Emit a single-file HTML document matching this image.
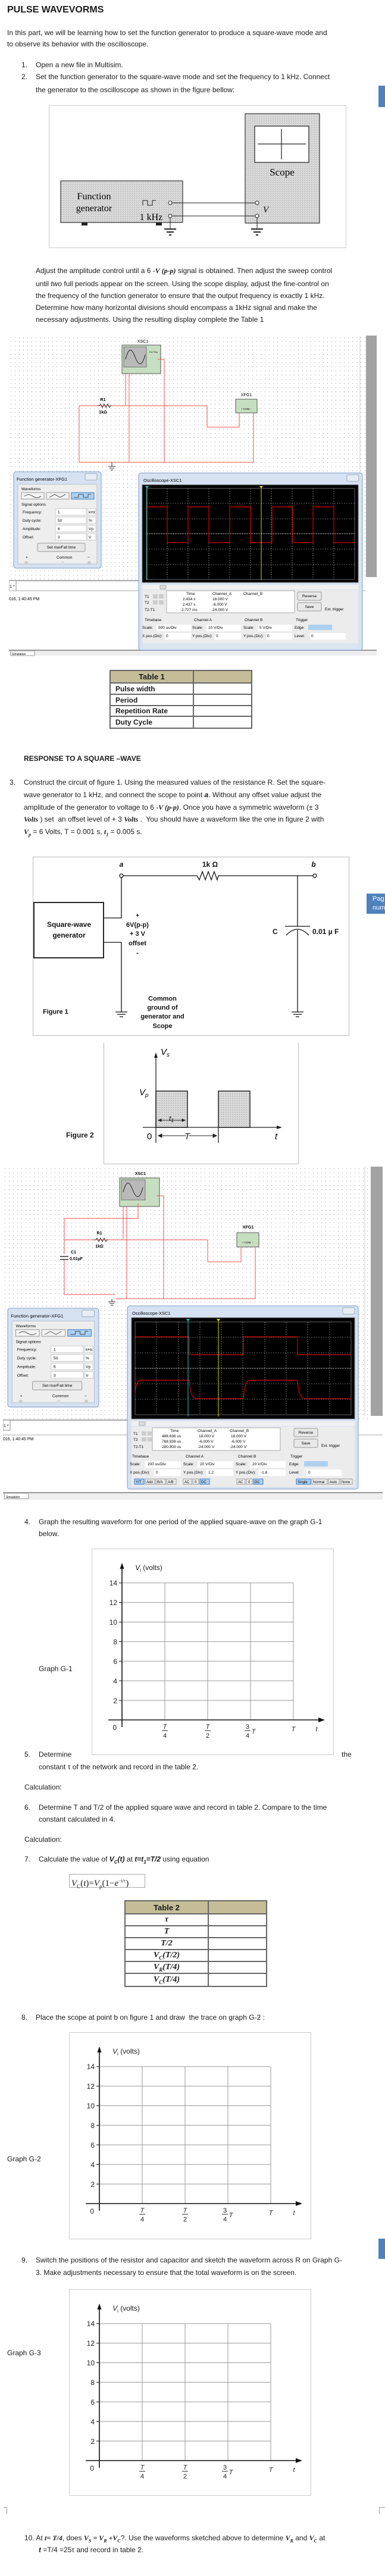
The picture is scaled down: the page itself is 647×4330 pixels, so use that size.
<!DOCTYPE html>
<html><head><meta charset="utf-8">
<style>
*{margin:0;padding:0;box-sizing:border-box}
body{width:647px;height:4330px;position:relative;overflow:hidden;background:#fff;font-family:"Liberation Sans",sans-serif;color:#1a1a1a}
.t{position:absolute;white-space:nowrap;font-size:12px;line-height:16px}
.b{font-weight:bold}
.s{font-family:"Liberation Serif",serif;font-style:italic;font-weight:bold}
.abs{position:absolute}
svg text{font-family:"Liberation Sans",sans-serif}
.tb{position:absolute;border-collapse:collapse;font-size:12px}
.tb td{border:2px solid #666;padding:0 8px}
.tab{position:absolute;background:#4f81bd}
</style></head><body>

<div class="t b" style="left:12px;top:7px;font-size:16px;line-height:20px">PULSE WAVEVORMS</div>
<div class="t" style="left:12px;top:47px">In this part, we will be learning how to set the function generator to produce a square-wave mode and</div>
<div class="t" style="left:12px;top:66px">to observe its behavior with the oscilloscope.</div>
<div class="t" style="left:36px;top:101px">1.</div><div class="t" style="left:60px;top:101px">Open a new file in Multisim.</div>
<div class="t" style="left:36px;top:121px">2.</div><div class="t" style="left:60px;top:121px">Set the function generator to the square-wave mode and set the frequency to 1 kHz. Connect</div>
<div class="t" style="left:60px;top:143px">the generator to the oscilloscope as shown in the figure bellow:</div>
<div class="tab" style="left:636px;top:144px;width:11px;height:36px"></div>

<!-- figure scope -->
<svg class="abs" style="left:82px;top:177px" width="500" height="241" viewBox="0 0 500 241">
<defs><pattern id="st" width="3" height="3" patternUnits="userSpaceOnUse"><rect width="3" height="3" fill="#e2e2e2"/><rect width="1" height="1" fill="#999"/><rect x="2" y="1" width="1" height="1" fill="#aaa"/></pattern></defs>
<rect x="0.5" y="0.5" width="499" height="239" fill="#fff" stroke="#ccc"/>
<rect x="330" y="14" width="125" height="184" fill="url(#st)" stroke="#333" stroke-width="1.2"/>
<rect x="346" y="35" width="91" height="61" fill="#fff" stroke="#222" stroke-width="1.2"/>
<line x1="351" y1="65" x2="432" y2="65" stroke="#222" stroke-width="1.2"/><line x1="391" y1="40" x2="391" y2="91" stroke="#222" stroke-width="1.2"/>
<text x="392" y="118" font-family="Liberation Serif" font-size="17" text-anchor="middle" style="font-family:'Liberation Serif'">Scope</text>
<rect x="20" y="127" width="205" height="70" fill="url(#st)" stroke="#333" stroke-width="1.2"/>
<rect x="55" y="197" width="10" height="5" fill="#222"/><rect x="180" y="197" width="10" height="5" fill="#222"/>
<text x="76" y="158" font-size="16" text-anchor="middle" style="font-family:'Liberation Serif'">Function</text>
<text x="76" y="178" font-size="16" text-anchor="middle" style="font-family:'Liberation Serif'">generator</text>
<path d="M158 168V160H166V168H174V160H180" fill="none" stroke="#222"/>
<text x="172" y="193" font-size="16" text-anchor="middle" style="font-family:'Liberation Serif'">1 kHz</text>
<circle cx="204" cy="164" r="3" fill="#fff" stroke="#222"/><circle cx="204" cy="186" r="3" fill="#fff" stroke="#222"/>
<circle cx="350" cy="164" r="3" fill="#fff" stroke="#222"/><circle cx="350" cy="186" r="3" fill="#fff" stroke="#222"/>
<line x1="207" y1="164" x2="347" y2="164" stroke="#222"/><line x1="207" y1="186" x2="347" y2="186" stroke="#222"/>
<line x1="204" y1="189" x2="204" y2="208" stroke="#222"/><line x1="350" y1="189" x2="350" y2="208" stroke="#222"/>
<path d="M194 208h20M198 213h12M202 218h4" stroke="#222" stroke-width="2"/>
<path d="M340 208h20M344 213h12M348 218h4" stroke="#222" stroke-width="2"/>
<text x="360" y="180" font-size="15" font-style="italic" style="font-family:'Liberation Serif'">V</text>
</svg>

<div class="t" style="left:60px;top:447px">Adjust the amplitude control until a 6 -<span class="s">V (p-p)</span> signal is obtained. Then adjust the sweep control</div>
<div class="t" style="left:60px;top:469px">until <i>two</i> full periods appear on the screen. Using the scope display, adjust the fine-control on</div>
<div class="t" style="left:60px;top:489px">the frequency of the function generator to ensure that the output frequency is exactly 1 kHz.</div>
<div class="t" style="left:60px;top:509px">Determine how many horizontal divisions should encompass a 1kHz signal and make the</div>
<div class="t" style="left:60px;top:529px">necessary adjustments. Using the resulting display complete the Table 1</div>

<!-- MULTISIM 1 -->
<svg class="abs" style="left:15px;top:564px" width="618" height="540" viewBox="0 0 618 540">
<defs><pattern id="dg" width="7" height="7" patternUnits="userSpaceOnUse"><rect width="7" height="7" fill="#fff"/><rect x="3" y="3" width="1" height="1" fill="#9a9a9a"/></pattern></defs>
<rect width="600" height="412" fill="url(#dg)"/>
<rect x="600" width="18" height="406" fill="#a3a3a3"/>
<line x1="590" y1="0" x2="590" y2="406" stroke="#ccc"/>
<text x="225" y="12" font-size="7" text-anchor="middle">XSC1</text>
<rect x="190" y="16" width="65" height="48" fill="#c7dfc1" stroke="#555"/>
<rect x="193" y="19" width="38" height="34" fill="#b9b9b9" stroke="#777"/>
<path d="M196 40C201 20 206 20 212 36S224 52 229 32" fill="none" stroke="#222"/>
<text x="236" y="29" font-size="4">Ext Trig</text>
<g fill="none" stroke="#f05050" stroke-width="1">
<path d="M118 118H333V154H387V130"/><path d="M118 118V213H411V130"/>
<path d="M196 64V118"/><path d="M202 64V213"/><path d="M250 40H261V213"/>
</g>
<path d="M148 118h4l2-3 3 6 3-6 3 6 3-6 3 6 2-3h2" fill="none" stroke="#333"/>
<text x="158" y="110" font-size="7" font-weight="bold" text-anchor="middle">R1</text>
<text x="158" y="131" font-size="7" font-weight="bold" text-anchor="middle">1kΩ</text>
<text x="399" y="102" font-size="7" text-anchor="middle">XFG1</text>
<rect x="381" y="107" width="36" height="23" fill="#c7dfc1" stroke="#555"/>
<text x="399" y="125" font-size="4.5" text-anchor="middle">+ COM −</text>
<path d="M173 213v7M167 220h12M169 223h8M171 226h4" stroke="#333"/>
<!-- func gen -->
<g transform="translate(8,229)">
<rect x="0" y="0" width="147" height="162" rx="4" fill="#d6e2f2" stroke="#7f9cc6"/>
<text x="5" y="15" font-size="7.5">Function generator-XFG1</text>
<rect x="120" y="3" width="20" height="11" rx="2" fill="#e6edf7" stroke="#9ab"/>
<rect x="7" y="21" width="133" height="134" fill="#eeeeee" stroke="#b5c1d0"/>
<text x="13" y="31" font-size="6.5">Waveforms</text>
<rect x="13" y="35" width="38" height="11" fill="#f3f3f3" stroke="#999"/><rect x="55" y="35" width="38" height="11" fill="#f3f3f3" stroke="#999"/><rect x="97" y="35" width="38" height="11" fill="#acd0f2" stroke="#3a7ac4"/>
<path d="M18 41q7-5 14 0t14 0M60 43l9-5 9 5 9-5M101 43h8v-5h8v5h8v-5h5" fill="none" stroke="#333" stroke-width=".8"/>
<text x="13" y="57" font-size="6.5">Signal options</text>
<g font-size="6.5"><text x="15" y="70">Frequency:</text><text x="15" y="84">Duty cycle:</text><text x="15" y="98">Amplitude:</text><text x="15" y="112">Offset:</text></g>
<g fill="#fff" stroke="#ccc"><rect x="70" y="62" width="52" height="11"/><rect x="70" y="76" width="52" height="11"/><rect x="70" y="90" width="52" height="11"/><rect x="70" y="104" width="52" height="11"/><rect x="124" y="62" width="14" height="11"/><rect x="124" y="76" width="14" height="11"/><rect x="124" y="90" width="14" height="11"/><rect x="124" y="104" width="14" height="11"/></g>
<g font-size="6.5"><text x="74" y="70">1</text><text x="74" y="84">50</text><text x="74" y="98">6</text><text x="74" y="112">3</text><text x="126" y="70">kHz</text><text x="126" y="84">%</text><text x="126" y="98">Vp</text><text x="126" y="112">V</text></g>
<rect x="40" y="120" width="80" height="14" rx="2" fill="#e8e8e8" stroke="#999"/>
<text x="80" y="129" font-size="6.5" text-anchor="middle">Set rise/Fall time</text>
<text x="20" y="146" font-size="6.5">+</text><text x="72" y="146" font-size="6.5">Common</text><text x="124" y="146" font-size="6.5">−</text>
<circle cx="21" cy="153" r="3" fill="#ccc"/><circle cx="82" cy="153" r="3" fill="#ddd"/><circle cx="127" cy="153" r="3" fill="#ccc"/>
</g>
<!-- status -->
<line x1="0" y1="412" x2="218" y2="412" stroke="#888" stroke-width="1.5"/>
<rect x="0" y="412" width="12" height="17" fill="#fff" stroke="#888"/><text x="1" y="424" font-size="7">1 *</text>
<line x1="0" y1="429" x2="618" y2="429" stroke="#aaa"/>
<text x="0" y="445" font-size="7">016, 1:40:45 PM</text>
<rect x="600" y="412" width="18" height="117" fill="#fff"/>
<line x1="0" y1="529" x2="618" y2="529" stroke="#999" stroke-width="2"/><rect x="0" y="530" width="618" height="8" fill="#eee"/>
<rect x="3" y="530" width="40" height="8" fill="#fff" stroke="#999"/><text x="5" y="537" font-size="5">Simulation</text>
<!-- scope window -->
<g transform="translate(218,231)">
<rect x="0" y="0" width="376" height="298" rx="4" fill="#d6e2f2" stroke="#7f9cc6"/>
<text x="8" y="15" font-size="7.5">Oscilloscope-XSC1</text>
<rect x="350" y="3" width="20" height="11" rx="2" fill="#e6edf7" stroke="#9ab"/>
<rect x="6" y="20" width="363" height="164" fill="#000" stroke="#666"/>
<rect x="13" y="26" width="350" height="153" fill="none" stroke="#aaa" stroke-width=".6"/>
<g stroke="#bbb" stroke-width=".6" stroke-dasharray="2 2">
<path d="M48 26V179M83 26V179M118 26V179M153 26V179M188 26V179M223 26V179M258 26V179M293 26V179M328 26V179"/>
<path d="M13 51H363M13 77H363M13 128H363M13 154H363"/></g>
<path d="M13 102H363" stroke="#ddd" stroke-width=".8" stroke-dasharray="3 1"/>
<path d="M13 57H48V117H83V57H118V117H153V57H188V117H224V57H259V117H293V57H328V117H363" fill="none" stroke="#d00" stroke-width="1.2"/>
<line x1="14" y1="24" x2="14" y2="180" stroke="#2cc"/><line x1="206" y1="24" x2="206" y2="180" stroke="#dd0"/>
<path d="M203 22h6l-3 4z" fill="#dd0"/><path d="M11 22h6l-3 4z" fill="#2cc"/>
<rect x="6" y="188" width="363" height="8" fill="#f0f0f0"/><rect x="36" y="189" width="10" height="6" fill="#ddd" stroke="#aaa"/>
<rect x="6" y="197" width="363" height="97" fill="#ececec"/>
<rect x="47" y="198" width="215" height="37" fill="#fff" stroke="#aaa"/>
<g font-size="6.5"><text x="10" y="210">T1</text><text x="10" y="220">T2</text><text x="10" y="232">T2-T1</text>
<rect x="24" y="204" width="8" height="7" fill="#ccc"/><rect x="34" y="204" width="8" height="7" fill="#ccc"/><rect x="24" y="214" width="8" height="7" fill="#ccc"/><rect x="34" y="214" width="8" height="7" fill="#ccc"/>
<text x="80" y="205">Time</text><text x="124" y="205">Channel_A</text><text x="176" y="205">Channel_B</text>
<text x="74" y="214">2.434 s</text><text x="124" y="214">18.000 V</text>
<text x="74" y="223">2.437 s</text><text x="124" y="223">-6.000 V</text>
<text x="72" y="232">2.727 ms</text><text x="122" y="232">-24.000 V</text>
<rect x="267" y="200" width="40" height="14" rx="2" fill="#e8e8e8" stroke="#999"/><text x="287" y="209" text-anchor="middle">Reverse</text>
<rect x="267" y="218" width="40" height="14" rx="2" fill="#e8e8e8" stroke="#999"/><text x="287" y="227" text-anchor="middle">Save</text>
<text x="313" y="231">Ext. trigger</text>
<text x="10" y="249">Timebase</text><text x="93" y="249">Channel A</text><text x="178" y="249">Channel B</text><text x="264" y="249">Trigger</text>
<text x="6" y="262">Scale:</text><rect x="30" y="255" width="58" height="11" fill="#fff"/><text x="33" y="262">500 us/Div</text>
<text x="90" y="262">Scale:</text><rect x="114" y="255" width="58" height="11" fill="#fff"/><text x="117" y="262">10 V/Div</text>
<text x="176" y="262">Scale:</text><rect x="200" y="255" width="58" height="11" fill="#fff"/><text x="203" y="262">5 V/Div</text>
<text x="262" y="262">Edge:</text><rect x="285" y="255" width="40" height="9" fill="#acd0f2"/>
<text x="6" y="276">X pos.(Div):</text><rect x="44" y="269" width="44" height="11" fill="#fff"/><text x="46" y="276">0</text>
<text x="90" y="276">Y pos.(Div):</text><rect x="128" y="269" width="44" height="11" fill="#fff"/><text x="130" y="276">0</text>
<text x="176" y="276">Y pos.(Div):</text><rect x="214" y="269" width="44" height="11" fill="#fff"/><text x="216" y="276">0</text>
<text x="262" y="276">Level:</text><rect x="288" y="269" width="60" height="11" fill="#fff"/><text x="290" y="276">0</text></g>
<rect x="6" y="286" width="363" height="8" fill="#dde6f0"/>
</g>
</svg>

<!-- Table 1 -->
<table class="tb" style="left:184px;top:1126px;width:240px">
<tr style="height:21px;background:#c4bd97"><td class="b" style="width:140px;text-align:center;font-size:13px">Table 1</td><td></td></tr>
<tr style="height:19px"><td class="b">Pulse width</td><td></td></tr>
<tr style="height:19px"><td class="b">Period</td><td></td></tr>
<tr style="height:18px"><td class="b">Repetition Rate</td><td></td></tr>
<tr style="height:20px"><td class="b">Duty Cycle</td><td></td></tr>
</table>

<div class="t b" style="left:40px;top:1267px">RESPONSE TO A SQUARE –WAVE</div>
<div class="t" style="left:16px;top:1307px">3.</div>
<div class="t" style="left:40px;top:1307px">Construct the circuit of figure 1. Using the measured values of the resistance R. Set the square-</div>
<div class="t" style="left:40px;top:1328px">wave generator to 1 kHz, and connect the scope to point <b><i>a</i></b>. Without any offset value adjust the</div>
<div class="t" style="left:40px;top:1349px">amplitude of the generator to voltage to 6 -<span class="s">V (p-p)</span>. Once you have a symmetric waveform (± 3</div>
<div class="t" style="left:40px;top:1369px"><span class="s">Volts</span> ) set&nbsp; an offset level of + 3 <span class="s">Volts</span> .&nbsp; You should have a waveform like the one in figure 2 with</div>
<div class="t" style="left:40px;top:1390px"><span class="s">V<sub style="font-size:8px">p</sub></span> = 6 Volts, T = 0.001 s, <span class="s">t<sub style="font-size:8px">1</sub></span> = 0.005 s.</div>

<!-- Figure 1 -->
<svg class="abs" style="left:55px;top:1440px" width="533" height="302" viewBox="0 0 533 302">
<rect x="0.5" y="0.5" width="531" height="300" fill="#fff" stroke="#bbb"/>
<g font-weight="bold" font-size="12" fill="#111">
<text x="149" y="17" text-anchor="middle" font-style="italic">a</text>
<text x="298" y="17" text-anchor="middle">1k Ω</text>
<text x="472" y="17" text-anchor="middle" font-style="italic">b</text>
<text x="61" y="118" text-anchor="middle">Square-wave</text><text x="61" y="136" text-anchor="middle">generator</text>
<text x="176" y="102" text-anchor="middle" font-size="10">+</text>
<text x="176" y="118" text-anchor="middle" font-size="11">6V(p-p)</text>
<text x="176" y="133" text-anchor="middle" font-size="11">+ 3 V</text>
<text x="176" y="149" text-anchor="middle" font-size="11">offset</text>
<text x="176" y="165" text-anchor="middle" font-size="11">-</text>
<text x="218" y="242" text-anchor="middle" font-size="11">Common</text><text x="218" y="257" text-anchor="middle" font-size="11">ground of</text><text x="218" y="272" text-anchor="middle" font-size="11">generator and</text><text x="218" y="288" text-anchor="middle" font-size="11">Scope</text>
<text x="17" y="264" font-size="11">Figure 1</text>
<text x="403" y="130" font-size="12">C</text>
<text x="470" y="130" font-size="12">0.01 µ F</text>
</g>
<g fill="none" stroke="#111" stroke-width="1.3">
<circle cx="149" cy="32" r="3" fill="#fff"/><circle cx="474" cy="32" r="3" fill="#fff"/>
<path d="M152 32H276l4 7 5-14 5 14 5-14 5 14 5-14 5 14 2-7H471"/>
<path d="M445 32V117M424 117H466M426 132Q445 112 464 132M445 123V261"/>
<rect x="2" y="77" width="117" height="93" stroke-width="1.8"/>
<path d="M119 103H149V35M119 144H149V261"/>
<path d="M139 261h20M142 265h14M146 269h6M435 261h20M438 265h14M442 269h6"/>
</g>
</svg>
<div class="tab" style="left:616px;top:1502px;width:31px;height:34px;color:#fff;font-size:11px;line-height:15px;padding:2px 0 0 10px">Pag<br>num</div>

<!-- Figure 2 -->
<div class="t b" style="left:111px;top:1900px">Figure 2</div>
<svg class="abs" style="left:174px;top:1753px" width="328" height="204" viewBox="0 0 328 204">
<defs><pattern id="st2" width="3" height="3" patternUnits="userSpaceOnUse"><rect width="3" height="3" fill="#ddd"/><rect width="1" height="1" fill="#888"/></pattern></defs>
<path d="M0.5 0V203.5H327.5V0" fill="none" stroke="#bbb"/>
<rect x="88" y="81" width="53" height="61" fill="url(#st2)" stroke="#222" stroke-width="1.5"/>
<rect x="193" y="81" width="53" height="61" fill="url(#st2)" stroke="#222" stroke-width="1.5"/>
<path d="M88 168V24M66 142H292M193 142V168" stroke="#222" stroke-width="1.3"/>
<path d="M88 16l-3 9h6zM300 142l-9-3v6z" fill="#222"/>
<path d="M92 130H137M92 130l5-2v4zM137 130l-5-2v4z" stroke="#222" fill="#222"/>
<path d="M92 156H190M92 156l6-3v6zM190 156l-6-3v6z" stroke="#222" fill="#222"/>
<g font-family="Liberation Serif" font-style="italic" font-size="15" style="font-family:'Liberation Serif'">
<text x="96" y="20">V<tspan font-size="10" dy="3">s</tspan></text>
<text x="60" y="88">V<tspan font-size="10" dy="3">p</tspan></text>
<text x="110" y="131" font-size="12">t<tspan font-size="8" dy="2">1</tspan></text>
<text x="136" y="162" fill="#222" stroke="#fff" stroke-width="3" paint-order="stroke">T</text>
<text x="288" y="162">t</text>
<text x="73" y="162" font-style="normal">0</text></g>
</svg>

<!-- MULTISIM 2 -->
<svg class="abs" style="left:5px;top:1961px" width="638" height="560" viewBox="0 0 638 560">
<defs><pattern id="dg2" width="7" height="7" patternUnits="userSpaceOnUse"><rect width="7" height="7" fill="#fff"/><rect x="3" y="3" width="1" height="1" fill="#9a9a9a"/></pattern></defs>
<rect width="618" height="426" fill="url(#dg2)"/>
<rect x="618" width="20" height="419" fill="#a3a3a3"/>
<line x1="608" y1="0" x2="608" y2="419" stroke="#ccc"/>
<text x="231" y="14" font-size="7" font-weight="bold" text-anchor="middle">XSC1</text>
<rect x="196" y="19" width="67" height="48" fill="#c7dfc1" stroke="#555"/>
<rect x="199" y="22" width="40" height="34" fill="#b9b9b9" stroke="#777"/>
<path d="M202 43C207 23 212 23 218 39S230 55 235 35" fill="none" stroke="#222"/>
<g fill="none" stroke="#f05050">
<path d="M103 87H227V62"/><path d="M103 123H344V160H400V136"/>
<path d="M103 87V147M103 157V215H189"/><path d="M189 222H424V136"/>
<path d="M202 67V123"/><path d="M208 67V222"/><path d="M258 49H270V222"/>
</g>
<path d="M96 151H110M96 156H110" stroke="#333" stroke-width="1.5"/>
<path d="M152 123h4l2-3 3 6 3-6 3 6 3-6 3 6 2-3h2" fill="none" stroke="#333"/>
<g font-size="7" font-weight="bold"><text x="162" y="114" text-anchor="middle">R1</text><text x="162" y="136" text-anchor="middle">1kΩ</text>
<text x="114" y="146">C1</text><text x="112" y="157">0.01µF</text>
<text x="412" y="104" text-anchor="middle">XFG1</text></g>
<rect x="393" y="111" width="37" height="24" fill="#c7dfc1" stroke="#555"/>
<text x="411" y="129" font-size="4.5" text-anchor="middle">+ COM −</text>
<path d="M183 222v5M177 227h12M179 230h8M181 233h4" stroke="#333"/>
<g transform="translate(8,238) scale(1.04,1.025)">
<rect x="0" y="0" width="147" height="162" rx="4" fill="#d6e2f2" stroke="#7f9cc6"/>
<text x="5" y="15" font-size="7.5">Function generator-XFG1</text>
<rect x="120" y="3" width="20" height="11" rx="2" fill="#e6edf7" stroke="#9ab"/>
<rect x="7" y="21" width="133" height="134" fill="#eeeeee" stroke="#b5c1d0"/>
<text x="13" y="31" font-size="6.5">Waveforms</text>
<rect x="13" y="35" width="38" height="11" fill="#f3f3f3" stroke="#999"/><rect x="55" y="35" width="38" height="11" fill="#f3f3f3" stroke="#999"/><rect x="97" y="35" width="38" height="11" fill="#acd0f2" stroke="#3a7ac4"/>
<path d="M18 41q7-5 14 0t14 0M60 43l9-5 9 5 9-5M101 43h8v-5h8v5h8v-5h5" fill="none" stroke="#333" stroke-width=".8"/>
<text x="13" y="57" font-size="6.5">Signal options</text>
<g font-size="6.5"><text x="15" y="70">Frequency:</text><text x="15" y="84">Duty cycle:</text><text x="15" y="98">Amplitude:</text><text x="15" y="112">Offset:</text></g>
<g fill="#fff" stroke="#ccc"><rect x="70" y="62" width="52" height="11"/><rect x="70" y="76" width="52" height="11"/><rect x="70" y="90" width="52" height="11"/><rect x="70" y="104" width="52" height="11"/><rect x="124" y="62" width="14" height="11"/><rect x="124" y="76" width="14" height="11"/><rect x="124" y="90" width="14" height="11"/><rect x="124" y="104" width="14" height="11"/></g>
<g font-size="6.5"><text x="74" y="70">1</text><text x="74" y="84">50</text><text x="74" y="98">6</text><text x="74" y="112">3</text><text x="126" y="70">kHz</text><text x="126" y="84">%</text><text x="126" y="98">Vp</text><text x="126" y="112">V</text></g>
<rect x="40" y="120" width="80" height="14" rx="2" fill="#e8e8e8" stroke="#999"/>
<text x="80" y="129" font-size="6.5" text-anchor="middle">Set rise/Fall time</text>
<text x="20" y="146" font-size="6.5">+</text><text x="72" y="146" font-size="6.5">Common</text><text x="124" y="146" font-size="6.5">−</text>
<circle cx="21" cy="153" r="3" fill="#ccc"/><circle cx="82" cy="153" r="3" fill="#ddd"/><circle cx="127" cy="153" r="3" fill="#ccc"/>
</g>
<line x1="0" y1="426" x2="209" y2="426" stroke="#888" stroke-width="1.5"/>
<rect x="0" y="426" width="12" height="17" fill="#fff" stroke="#888"/><text x="1" y="438" font-size="7">1 *</text>
<line x1="0" y1="451" x2="638" y2="451" stroke="#aaa"/>
<text x="0" y="460" font-size="7">016, 1:40:45 PM</text>
<line x1="0" y1="548" x2="638" y2="548" stroke="#999" stroke-width="2"/><rect x="0" y="549" width="638" height="11" fill="#eee"/>
<rect x="3" y="549" width="40" height="9" fill="#fff" stroke="#999"/><text x="5" y="557" font-size="5">Simulation</text>
<g transform="translate(209,234)">
<rect x="0" y="0" width="388" height="308" rx="4" fill="#d6e2f2" stroke="#7f9cc6"/>
<text x="8" y="15" font-size="7.5">Oscilloscope-XSC1</text>
<rect x="362" y="3" width="20" height="11" rx="2" fill="#e6edf7" stroke="#9ab"/>
<rect x="7" y="20" width="375" height="170" fill="#000" stroke="#666"/>
<rect x="13" y="27" width="363" height="156" fill="none" stroke="#aaa" stroke-width=".6"/>
<g stroke="#bbb" stroke-width=".6" stroke-dasharray="2 2">
<path d="M49 27V183M86 27V183M122 27V183M158 27V183M194 27V183M231 27V183M267 27V183M303 27V183M340 27V183"/>
<path d="M13 53H376M13 79H376M13 131H376M13 157H376"/></g>
<path d="M13 105H376" stroke="#ddd" stroke-width=".8" stroke-dasharray="3 1"/>
<path d="M13 52H104V82H195V52H286V82H376" fill="none" stroke="#d00" stroke-width="1.2"/>
<path d="M13 150Q14 126 22 125H104Q106 155 115 156H195Q197 126 206 125H286Q288 155 297 156H376" fill="none" stroke="#d00" stroke-width="1.2"/>
<line x1="102" y1="24" x2="102" y2="186" stroke="#2cc"/><line x1="153" y1="24" x2="153" y2="186" stroke="#dd0"/>
<path d="M99 22h6l-3 4z" fill="#2cc"/><path d="M150 22h6l-3 4z" fill="#dd0"/>
<rect x="7" y="194" width="375" height="8" fill="#f0f0f0"/><rect x="20" y="195" width="10" height="6" fill="#ddd" stroke="#aaa"/>
<rect x="7" y="203" width="375" height="101" fill="#ececec"/>
<rect x="42" y="205" width="215" height="38" fill="#fff" stroke="#aaa"/>
<g font-size="6.5"><text x="10" y="217">T1</text><text x="10" y="227">T2</text><text x="10" y="239">T2-T1</text>
<rect x="24" y="211" width="8" height="7" fill="#ccc"/><rect x="34" y="211" width="8" height="7" fill="#ccc"/><rect x="24" y="221" width="8" height="7" fill="#ccc"/><rect x="34" y="221" width="8" height="7" fill="#ccc"/>
<text x="72" y="212">Time</text><text x="118" y="212">Channel_A</text><text x="172" y="212">Channel_B</text>
<text x="58" y="221">488.636 us</text><text x="120" y="221">18.000 V</text><text x="174" y="221">18.000 V</text>
<text x="58" y="230">768.939 us</text><text x="120" y="230">-6.000 V</text><text x="174" y="230">-6.000 V</text>
<text x="58" y="239">280.303 us</text><text x="118" y="239">-24.000 V</text><text x="172" y="239">-24.000 V</text>
<rect x="280" y="206" width="40" height="14" rx="2" fill="#e8e8e8" stroke="#999"/><text x="300" y="215" text-anchor="middle">Reverse</text>
<rect x="280" y="224" width="40" height="14" rx="2" fill="#e8e8e8" stroke="#999"/><text x="300" y="233" text-anchor="middle">Save</text>
<text x="326" y="237">Ext. trigger</text>
<text x="8" y="255">Timebase</text><text x="98" y="255">Channel A</text><text x="186" y="255">Channel B</text><text x="274" y="255">Trigger</text>
<text x="4" y="268">Scale:</text><rect x="30" y="261" width="60" height="11" fill="#fff"/><text x="34" y="268">200 us/Div</text>
<text x="94" y="268">Scale:</text><rect x="118" y="261" width="60" height="11" fill="#fff"/><text x="122" y="268">20 V/Div</text>
<text x="182" y="268">Scale:</text><rect x="206" y="261" width="60" height="11" fill="#fff"/><text x="210" y="268">20 V/Div</text>
<text x="272" y="268">Edge:</text><rect x="297" y="261" width="40" height="9" fill="#acd0f2"/>
<text x="4" y="282">X pos.(Div):</text><rect x="44" y="275" width="46" height="11" fill="#fff"/><text x="48" y="282">0</text>
<text x="94" y="282">Y pos.(Div):</text><rect x="132" y="275" width="46" height="11" fill="#fff"/><text x="136" y="282">1.2</text>
<text x="182" y="282">Y pos.(Div):</text><rect x="220" y="275" width="46" height="11" fill="#fff"/><text x="224" y="282">-1.6</text>
<text x="272" y="282">Level:</text><rect x="300" y="275" width="60" height="11" fill="#fff"/><text x="304" y="282">0</text></g>
<g font-size="6"><rect x="12" y="291" width="16" height="9" fill="#acd0f2" stroke="#3a7ac4"/><text x="14" y="298">Y/T</text><rect x="30" y="291" width="16" height="9" fill="#eee" stroke="#999"/><text x="32" y="298">Add</text><rect x="48" y="291" width="16" height="9" fill="#eee" stroke="#999"/><text x="50" y="298">B/A</text><rect x="66" y="291" width="16" height="9" fill="#eee" stroke="#999"/><text x="68" y="298">A/B</text>
<rect x="94" y="291" width="14" height="9" fill="#eee" stroke="#999"/><text x="96" y="298">AC</text><rect x="110" y="291" width="10" height="9" fill="#eee" stroke="#999"/><text x="113" y="298">0</text><rect x="122" y="291" width="16" height="9" fill="#acd0f2" stroke="#3a7ac4"/><text x="124" y="298">DC</text>
<rect x="184" y="291" width="14" height="9" fill="#eee" stroke="#999"/><text x="186" y="298">AC</text><rect x="200" y="291" width="10" height="9" fill="#eee" stroke="#999"/><text x="203" y="298">0</text><rect x="212" y="291" width="16" height="9" fill="#acd0f2" stroke="#3a7ac4"/><text x="214" y="298">DC</text>
<rect x="284" y="291" width="24" height="9" fill="#acd0f2" stroke="#3a7ac4"/><text x="286" y="298">Single</text><rect x="310" y="291" width="26" height="9" fill="#eee" stroke="#999"/><text x="312" y="298">Normal</text><rect x="338" y="291" width="18" height="9" fill="#eee" stroke="#999"/><text x="340" y="298">Auto</text><rect x="358" y="291" width="20" height="9" fill="#eee" stroke="#999"/><text x="360" y="298">None</text></g>
</g>
</svg>

<div class="t" style="left:41px;top:2550px">4.</div>
<div class="t" style="left:65px;top:2550px">Graph the resulting waveform for one period of the applied square-wave on the graph G-1</div>
<div class="t" style="left:65px;top:2570px">below.</div>
<div class="t" style="left:65px;top:2797px">Graph G-1</div>

<!-- Graph G-1 -->
<svg class="abs" style="left:154px;top:2603px" width="408" height="348" viewBox="0 0 408 348">
<rect x="0.5" y="0.5" width="406" height="346" fill="#fff" stroke="#ccc"/>
<g stroke="#999" stroke-width="1"><path d="M51 57.7H339M51 90.6H339M51 123.5H339M51 156.4H339M51 189.3H339M51 222.2H339M51 255.1H339M123 57.7V288M195 57.7V288M267 57.7V288M339 57.7V288"/></g>
<g stroke="#111" stroke-width="1.6"><path d="M51 300V32M28 288H382"/><path d="M46 57.7h5M46 90.6h5M46 123.5h5M46 156.4h5M46 189.3h5M46 222.2h5M46 255.1h5" stroke-width="1"/></g>
<path d="M51 24l-3.5 10h7zM392 288l-11-4v8z" fill="#111"/>
<g font-size="12" fill="#222" style="font-family:'Liberation Serif'" text-anchor="end"><text x="43" y="62">14</text><text x="43" y="95">12</text><text x="43" y="128">10</text><text x="43" y="161">8</text><text x="43" y="194">6</text><text x="43" y="227">4</text><text x="43" y="260">2</text><text x="42" y="305">0</text></g>
<g font-size="11" fill="#222" style="font-family:'Liberation Serif'" text-anchor="middle"><text x="123" y="303" font-style="italic">T</text><text x="123" y="318">4</text><text x="195" y="303" font-style="italic">T</text><text x="195" y="318">2</text><text x="262" y="303">3</text><text x="262" y="318">4</text><text x="272" y="311" font-style="italic">T</text><text x="339" y="307" font-style="italic">T</text><text x="378" y="307" font-style="italic">t</text><text x="96" y="36" font-size="12"><tspan font-style="italic">V</tspan><tspan font-size="8" dy="3">i</tspan><tspan dy="-3"> (volts)</tspan></text></g>
<path d="M118 306h10M190 306h10M257 306h10" stroke="#222"/>
</svg>

<div class="t" style="left:41px;top:2941px">5.</div><div class="t" style="left:65px;top:2941px">Determine</div><div class="t" style="left:574px;top:2941px">the</div>
<div class="t" style="left:65px;top:2962px">constant τ of the network and record in the table 2.</div>
<div class="t" style="left:41px;top:2996px">Calculation:</div>
<div class="t" style="left:41px;top:3030px">6.</div><div class="t" style="left:65px;top:3030px">Determine T and T/2 of the applied square wave and record in table 2. Compare to the time</div>
<div class="t" style="left:65px;top:3050px">constant calculated in 4.</div>
<div class="t" style="left:41px;top:3084px">Calculation:</div>
<div class="t" style="left:41px;top:3117px">7.</div><div class="t" style="left:65px;top:3117px">Calculate the value of <b><i>V<sub style="font-size:8px">C</sub>(t)</i></b> at <b><i>t=t<sub style="font-size:8px">1</sub>=T/2</i></b> using equation</div>

<div class="abs" style="left:116px;top:3150px;width:128px;height:23px;border:1px solid #aaa;font-family:'Liberation Serif',serif;font-size:15px;line-height:21px;padding-left:3px;white-space:nowrap"><i>V</i><sub style="font-size:9px">C</sub>(<i>t</i>)=<i>V</i><sub style="font-size:9px">p</sub>(1−<i>e</i><sup style="font-size:8px">−t/τ</sup>)</div>

<table class="tb" style="left:209px;top:3194px;width:240px;font-family:'Liberation Serif',serif;font-style:italic;font-weight:bold;font-size:14px">
<tr style="height:22px;background:#c4bd97"><td style="width:140px;text-align:center;font-family:'Liberation Sans',sans-serif;font-style:normal;font-size:13px">Table 2</td><td></td></tr>
<tr style="height:20px"><td style="text-align:center">τ</td><td></td></tr>
<tr style="height:20px"><td style="text-align:center">T</td><td></td></tr>
<tr style="height:20px"><td style="text-align:center">T/2</td><td></td></tr>
<tr style="height:20px"><td style="text-align:center">V<sub style="font-size:9px">C</sub>(T/2)</td><td></td></tr>
<tr style="height:20px"><td style="text-align:center">V<sub style="font-size:9px">R</sub>(T/4)</td><td></td></tr>
<tr style="height:22px"><td style="text-align:center">V<sub style="font-size:9px">C</sub>(T/4)</td><td></td></tr>
</table>

<div class="t" style="left:36px;top:3383px">8.</div><div class="t" style="left:60px;top:3383px">Place the scope at point b on figure 1 and draw&nbsp; the trace on graph G-2 :</div>
<div class="t" style="left:12px;top:3621px">Graph G-2</div>

<svg class="abs" style="left:116px;top:3416px" width="408" height="349" viewBox="0 0 408 349">
<rect x="0.5" y="0.5" width="406" height="347" fill="#fff" stroke="#ccc"/>
<g stroke="#999" stroke-width="1"><path d="M51 57.7H339M51 90.6H339M51 123.5H339M51 156.4H339M51 189.3H339M51 222.2H339M51 255.1H339M123 57.7V288M195 57.7V288M267 57.7V288M339 57.7V288"/></g>
<g stroke="#111" stroke-width="1.6"><path d="M51 300V32M28 288H382"/><path d="M46 57.7h5M46 90.6h5M46 123.5h5M46 156.4h5M46 189.3h5M46 222.2h5M46 255.1h5" stroke-width="1"/></g>
<path d="M51 24l-3.5 10h7zM392 288l-11-4v8z" fill="#111"/>
<g font-size="12" fill="#222" style="font-family:'Liberation Serif'" text-anchor="end"><text x="43" y="62">14</text><text x="43" y="95">12</text><text x="43" y="128">10</text><text x="43" y="161">8</text><text x="43" y="194">6</text><text x="43" y="227">4</text><text x="43" y="260">2</text><text x="42" y="305">0</text></g>
<g font-size="11" fill="#222" style="font-family:'Liberation Serif'" text-anchor="middle"><text x="123" y="303" font-style="italic">T</text><text x="123" y="318">4</text><text x="195" y="303" font-style="italic">T</text><text x="195" y="318">2</text><text x="262" y="303">3</text><text x="262" y="318">4</text><text x="272" y="311" font-style="italic">T</text><text x="339" y="307" font-style="italic">T</text><text x="378" y="307" font-style="italic">t</text><text x="96" y="36" font-size="12"><tspan font-style="italic">V</tspan><tspan font-size="8" dy="3">i</tspan><tspan dy="-3"> (volts)</tspan></text></g>
<path d="M118 306h10M190 306h10M257 306h10" stroke="#222"/>
</svg>

<div class="tab" style="left:636px;top:3763px;width:11px;height:34px"></div>
<div class="t" style="left:36px;top:3791px">9.</div><div class="t" style="left:60px;top:3791px">Switch the positions of the resistor and capacitor and sketch the waveform across R on Graph G-</div>
<div class="t" style="left:60px;top:3812px">3. Make adjustments necessary to ensure that the total waveform is on the screen.</div>
<div class="t" style="left:12px;top:3947px">Graph G-3</div>

<svg class="abs" style="left:116px;top:3848px" width="408" height="348" viewBox="0 0 408 348">
<rect x="0.5" y="0.5" width="406" height="346" fill="#fff" stroke="#ccc"/>
<g stroke="#999" stroke-width="1"><path d="M51 57.7H339M51 90.6H339M51 123.5H339M51 156.4H339M51 189.3H339M51 222.2H339M51 255.1H339M123 57.7V288M195 57.7V288M267 57.7V288M339 57.7V288"/></g>
<g stroke="#111" stroke-width="1.6"><path d="M51 300V32M28 288H382"/><path d="M46 57.7h5M46 90.6h5M46 123.5h5M46 156.4h5M46 189.3h5M46 222.2h5M46 255.1h5" stroke-width="1"/></g>
<path d="M51 24l-3.5 10h7zM392 288l-11-4v8z" fill="#111"/>
<g font-size="12" fill="#222" style="font-family:'Liberation Serif'" text-anchor="end"><text x="43" y="62">14</text><text x="43" y="95">12</text><text x="43" y="128">10</text><text x="43" y="161">8</text><text x="43" y="194">6</text><text x="43" y="227">4</text><text x="43" y="260">2</text><text x="42" y="305">0</text></g>
<g font-size="11" fill="#222" style="font-family:'Liberation Serif'" text-anchor="middle"><text x="123" y="303" font-style="italic">T</text><text x="123" y="318">4</text><text x="195" y="303" font-style="italic">T</text><text x="195" y="318">2</text><text x="262" y="303">3</text><text x="262" y="318">4</text><text x="272" y="311" font-style="italic">T</text><text x="339" y="307" font-style="italic">T</text><text x="378" y="307" font-style="italic">t</text><text x="96" y="36" font-size="12"><tspan font-style="italic">V</tspan><tspan font-size="8" dy="3">i</tspan><tspan dy="-3"> (volts)</tspan></text></g>
<path d="M118 306h10M190 306h10M257 306h10" stroke="#222"/>
</svg>

<div class="abs" style="left:6px;top:4214px;width:6px;height:12px;border-top:1px solid #999;border-right:1px solid #999"></div>
<div class="abs" style="left:637px;top:4214px;width:10px;height:12px;border-top:1px solid #999;border-left:1px solid #999"></div>

<div class="t" style="left:41px;top:4258px">10. At <span class="s">t= T/4</span>, does <span class="s">V<sub style="font-size:8px">S</sub> = V<sub style="font-size:8px">R</sub> +V<sub style="font-size:8px">C</sub></span>?. Use the waveforms sketched above to determine <span class="s">V<sub style="font-size:8px">R</sub></span> and <span class="s">V<sub style="font-size:8px">C</sub></span> at</div>
<div class="t" style="left:65px;top:4278px"><b><i>t</i></b> =T/4 =25τ and record in table 2.</div>

</body></html>
